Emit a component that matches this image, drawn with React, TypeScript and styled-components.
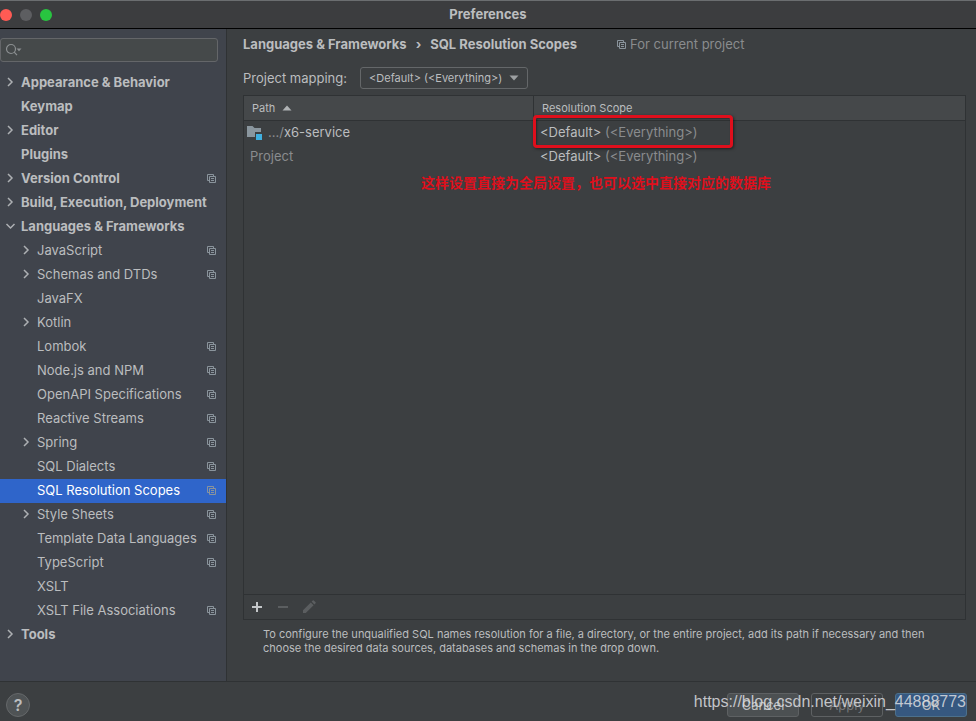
import React, { useState } from "react";
import styled, { createGlobalStyle } from "styled-components";

const color = {
  window: "#3c3f41",
  sidebar: "#40444c",
  line: "#2f3234",
  text: "#bbbdbf",
  muted: "#8a8c8e",
  selection: "#2f65ca",
  mark: "#df0f1c",
};

const GlobalStyle = createGlobalStyle`
  * { box-sizing: border-box; }
  body { margin: 0; background: ${color.window}; }
  button, input, select { font: inherit; color: inherit; margin: 0; }
`;

const Window = styled.div`
  display: flex;
  flex-direction: column;
  min-height: 100vh;
  position: relative;
  background: ${color.window};
  color: ${color.text};
  font: 13px/16px Inter, "Noto Sans CJK SC", sans-serif;
`;

const TitleBar = styled.header`
  display: grid;
  grid-template-columns: 1fr auto 1fr;
  align-items: center;
  height: 29px;
  background: #3c3d3f;
  border-top: 1px solid #6b6e70;
  border-bottom: 1px solid #000;
`;

const Lights = styled.div`
  display: flex;
  gap: 8px;
`;

const Light = styled.button<{ $fill: string }>`
  width: 12px;
  height: 12px;
  padding: 0;
  border: 0;
  border-radius: 50%;
  background: ${(p) => p.$fill};
`;

const Title = styled.h1`
  margin: 0;
  padding-bottom: 2px;
  font-size: 13px;
  font-weight: 700;
`;

const Body = styled.div`
  display: flex;
  flex: 1;
`;

const Sidebar = styled.nav`
  flex: none;
  width: 227px;
  padding-top: 9px;
  background: ${color.sidebar};
  border-right: 1px solid ${color.line};
`;

const SearchBox = styled.label`
  display: flex;
  align-items: center;
  height: 24px;
  margin: 0 8px 9px 0;
  padding-left: 5px;
  background: #45494a;
  border: 1px solid #646669;
  border-radius: 3px;
`;

const SearchInput = styled.input`
  flex: 1;
  min-width: 0;
  padding: 0 4px;
  border: 0;
  outline: 0;
  background: transparent;
`;

const Tree = styled.ul`
  margin: 0;
  padding: 0;
  list-style: none;
`;

const TreeRow = styled.button<{ $nested?: boolean; $selected: boolean }>`
  display: flex;
  align-items: center;
  width: 100%;
  height: 24px;
  padding: 0 9px 2px ${(p) => (p.$nested ? 21 : 5)}px;
  border: 0;
  text-align: left;
  white-space: nowrap;
  font-weight: ${(p) => (p.$nested ? 400 : 700)};
  background: ${(p) => (p.$selected ? color.selection : "transparent")};
  color: ${(p) => (p.$selected ? "#fff" : color.text)};
`;

const ArrowSlot = styled.span`
  display: flex;
  width: 16px;
`;

const RowLabel = styled.span`
  flex: 1;
`;

const Content = styled.main`
  display: flex;
  flex-direction: column;
  flex: 1;
  min-width: 0;
  padding: 7px 10px 26px 16px;
`;

const Breadcrumbs = styled.div`
  display: flex;
  align-items: center;
  gap: 9px;
  height: 16px;
  font-weight: 700;
`;

const ProjectNote = styled.span`
  display: flex;
  align-items: center;
  gap: 3px;
  margin-left: 30px;
  font-weight: 400;
  color: ${color.muted};
`;

const MappingRow = styled.div`
  display: flex;
  align-items: center;
  gap: 13px;
  margin: 15px 0 6px;
`;

const SelectFrame = styled.span`
  display: grid;
  grid-template-columns: 168px;
  align-items: center;
  > * { grid-area: 1 / 1; }
  > svg { justify-self: end; margin-right: 9px; pointer-events: none; }
`;

const Select = styled.select`
  appearance: none;
  height: 22px;
  padding: 0 24px 0 8px;
  font-size: 11px;
  background: ${color.window};
  border: 1px solid #646769;
  border-radius: 3px;
`;

const Panel = styled.section`
  display: flex;
  flex-direction: column;
  flex: 1;
  position: relative;
  border: 1px solid ${color.line};
`;

const TableArea = styled.div`
  flex: 1;
`;

const Table = styled.table`
  width: 100%;
  table-layout: fixed;
  border-collapse: separate;
  border-spacing: 0;
`;

const HeadCell = styled.th`
  height: 25px;
  padding: 0 8px;
  background: #45484a;
  border-bottom: 1px solid ${color.line};
  font-size: 11px;
  font-weight: 400;
  text-align: left;
  &:first-child { width: 290px; border-right: 1px solid ${color.line}; }
  svg { margin-left: 7px; }
`;

const Cell = styled.td`
  height: 24px;
  padding: 0 6px 2px;
  position: relative;
`;

const PathLabel = styled.span`
  display: flex;
  align-items: center;
  gap: 5px;
  margin-left: -3px;
`;

const Muted = styled.span`
  color: ${color.muted};
`;

const Highlight = styled.span`
  position: absolute;
  left: -1px;
  top: -6px;
  width: 200px;
  height: 33px;
  border: 3px solid ${color.mark};
  border-radius: 4px;
  box-shadow: 1px 1px 3px rgba(0, 0, 0, 0.5), inset 1px 1px 2px rgba(0, 0, 0, 0.4);
  pointer-events: none;
`;

const Annotation = styled.p`
  position: absolute;
  left: 177px;
  top: 76px;
  margin: 0;
  font: 700 14px/20px "Noto Sans CJK SC", sans-serif;
  color: ${color.mark};
  white-space: nowrap;
`;

const Toolbar = styled.div`
  display: flex;
  align-items: center;
  gap: 10px;
  height: 25px;
  padding-left: 5px;
  border-top: 1px solid ${color.line};
`;

const ToolButton = styled.button`
  display: flex;
  width: 16px;
  height: 16px;
  padding: 0;
  border: 0;
  background: transparent;
  color: #c3c6c8;
  &:disabled { color: #5b5e60; }
`;

const Hint = styled.p`
  margin: 7px 20px 0;
  font-size: 11px;
  line-height: 14px;
`;

const Footer = styled.footer`
  display: flex;
  align-items: center;
  gap: 12px;
  height: 40px;
  padding: 7px 9px 0 6px;
  border-top: 1px solid ${color.line};
`;

const HelpButton = styled.button`
  width: 24px;
  height: 24px;
  margin-right: auto;
  padding: 0;
  border: 1px solid #65686a;
  border-radius: 50%;
  background: #4f5355;
  font-size: 16px;
  font-weight: 600;
`;

const DialogButton = styled.button<{ $kind?: "primary" | "plain" }>`
  width: 72px;
  height: 24px;
  padding: 0;
  border: 1px solid ${(p) => (p.$kind === "primary" ? "#4c708c" : "#5e6163")};
  border-radius: 3px;
  background: ${(p) => (p.$kind === "primary" ? "#365880" : "#4c5052")};
  &:disabled { background: transparent; color: #747678; }
`;

const Watermark = styled.span`
  position: absolute;
  right: 10px;
  bottom: 9px;
  font: 16px/20px "Liberation Sans", Arial, sans-serif;
  color: rgba(220, 222, 224, 0.85);
  pointer-events: none;
`;

const Chevron = ({ open }: { open?: boolean }) => (
  <svg width="12" height="12" viewBox="0 0 12 12" fill="none" stroke="#adb0b3" strokeWidth="1.5">
    <path d={open ? "M1.5 4 5.5 8 9.5 4" : "M3 2 7 6 3 10"} />
  </svg>
);

const ScopeIcon = () => (
  <svg width="11" height="11" viewBox="0 0 11 11" fill="none" stroke="#8a949c">
    <path d="M3 7.5H1.5V1.5H7.5V3M3.5 3.5H9.5V9.5H3.5ZM5 5.5H8M5 7.5H8" />
  </svg>
);

const SearchIcon = () => (
  <svg width="16" height="14" viewBox="0 0 16 14" fill="none" stroke="#8c9092" strokeWidth="1.2">
    <circle cx="5" cy="6" r="4.5" />
    <path d="M8.2 9.2 11 12.2" />
    <path d="M10.5 5.5h5L13 8.3z" fill="#8c9092" stroke="none" />
  </svg>
);

const FolderIcon = () => (
  <svg width="16" height="16" viewBox="0 0 16 16">
    <path d="M0 2H5.5L7.5 4H14V8H8V13H0Z" fill="#8a969e" />
    <path d="M9 10h6v6H9z" fill="#40b0e0" />
  </svg>
);

type Item = { label: string; nested?: boolean; arrow?: "open" | "closed"; scoped?: boolean };

const items: Item[] = [
  { label: "Appearance & Behavior", arrow: "closed" },
  { label: "Keymap" },
  { label: "Editor", arrow: "closed" },
  { label: "Plugins" },
  { label: "Version Control", arrow: "closed", scoped: true },
  { label: "Build, Execution, Deployment", arrow: "closed" },
  { label: "Languages & Frameworks", arrow: "open" },
  { label: "JavaScript", nested: true, arrow: "closed", scoped: true },
  { label: "Schemas and DTDs", nested: true, arrow: "closed", scoped: true },
  { label: "JavaFX", nested: true },
  { label: "Kotlin", nested: true, arrow: "closed" },
  { label: "Lombok", nested: true, scoped: true },
  { label: "Node.js and NPM", nested: true, scoped: true },
  { label: "OpenAPI Specifications", nested: true, scoped: true },
  { label: "Reactive Streams", nested: true, scoped: true },
  { label: "Spring", nested: true, arrow: "closed", scoped: true },
  { label: "SQL Dialects", nested: true, scoped: true },
  { label: "SQL Resolution Scopes", nested: true, scoped: true },
  { label: "Style Sheets", nested: true, arrow: "closed", scoped: true },
  { label: "Template Data Languages", nested: true, scoped: true },
  { label: "TypeScript", nested: true, scoped: true },
  { label: "XSLT", nested: true },
  { label: "XSLT File Associations", nested: true, scoped: true },
  { label: "Tools", arrow: "closed" },
];

export default function App() {
  const [selected, setSelected] = useState("SQL Resolution Scopes");

  return (
    <Window>
      <GlobalStyle />
      <TitleBar>
        <Lights>
          <Light $fill="#ff5b54" aria-label="Close" />
          <Light $fill="#5d5e61" aria-label="Minimize" />
          <Light $fill="#28c440" aria-label="Zoom" />
        </Lights>
        <Title>Preferences</Title>
      </TitleBar>

      <Body>
        <Sidebar>
          <SearchBox>
            <SearchIcon />
            <SearchInput type="text" aria-label="Search settings" />
          </SearchBox>
          <Tree>
            {items.map((item) => (
              <li key={item.label}>
                <TreeRow
                  $nested={item.nested}
                  $selected={item.label === selected}
                  onClick={() => setSelected(item.label)}
                >
                  <ArrowSlot>{item.arrow && <Chevron open={item.arrow === "open"} />}</ArrowSlot>
                  <RowLabel>{item.label}</RowLabel>
                  {item.scoped && <ScopeIcon />}
                </TreeRow>
              </li>
            ))}
          </Tree>
        </Sidebar>

        <Content>
          <Breadcrumbs>
            <span>Languages &amp; Frameworks</span>
            <span>›</span>
            <span>SQL Resolution Scopes</span>
            <ProjectNote>
              <ScopeIcon />
              For current project
            </ProjectNote>
          </Breadcrumbs>
          <MappingRow>
            <label htmlFor="mapping">Project mapping:</label>
            <SelectFrame>
              <Select id="mapping">
                <option>{"<Default> (<Everything>)"}</option>
              </Select>
              <svg width="10" height="6" viewBox="0 0 10 6">
                <path d="M0.5 0.5h9L5 5.5z" fill="#9da0a2" />
              </svg>
            </SelectFrame>
          </MappingRow>

          <Panel>
            <TableArea>
              <Table>
                <thead>
                  <tr>
                    <HeadCell>
                      Path
                      <svg width="10" height="8" viewBox="0 0 10 8">
                        <path d="M0.5 6.5h9L5 1.5z" fill="#b0b3b5" />
                      </svg>
                    </HeadCell>
                    <HeadCell>Resolution Scope</HeadCell>
                  </tr>
                </thead>
                <tbody>
                  <tr>
                    <Cell>
                      <PathLabel>
                        <FolderIcon />
                        <span>
                          <Muted>.../</Muted>x6-service
                        </span>
                      </PathLabel>
                    </Cell>
                    <Cell>
                      {"<Default> "}
                      <Muted>{"(<Everything>)"}</Muted>
                      <Highlight />
                    </Cell>
                  </tr>
                  <tr>
                    <Cell>
                      <Muted>Project</Muted>
                    </Cell>
                    <Cell>
                      {"<Default> "}
                      <Muted>{"(<Everything>)"}</Muted>
                    </Cell>
                  </tr>
                </tbody>
              </Table>
            </TableArea>
            <Toolbar>
              <ToolButton aria-label="Add">
                <svg width="16" height="16" viewBox="0 0 16 16" stroke="currentColor" strokeWidth="2">
                  <path d="M8 3v10M3 8h10" />
                </svg>
              </ToolButton>
              <ToolButton aria-label="Remove" disabled>
                <svg width="16" height="16" viewBox="0 0 16 16" stroke="currentColor" strokeWidth="2">
                  <path d="M3 8h10" />
                </svg>
              </ToolButton>
              <ToolButton aria-label="Edit" disabled>
                <svg width="16" height="16" viewBox="0 0 16 16" fill="currentColor">
                  <path d="M2 11.2 9.8 3.4 12.6 6.2 4.8 14H2zM10.6 2.6 11.8 1.4Q12.3 1 12.8 1.4L14.6 3.2Q15 3.7 14.6 4.2L13.4 5.4z" />
                </svg>
              </ToolButton>
            </Toolbar>
            <Annotation>这样设置直接为全局设置，也可以选中直接对应的数据库</Annotation>
          </Panel>
          <Hint>
            To configure the unqualified SQL names resolution for a file, a directory, or the entire project, add its
            path if necessary and then choose the desired data sources, databases and schemas in the drop down.
          </Hint>
        </Content>
      </Body>

      <Footer>
        <HelpButton aria-label="Help">?</HelpButton>
        <DialogButton>Cancel</DialogButton>
        <DialogButton disabled>Apply</DialogButton>
        <DialogButton $kind="primary">OK</DialogButton>
      </Footer>
      <Watermark>https://blog.csdn.net/weixin_44888773</Watermark>
    </Window>
  );
}
